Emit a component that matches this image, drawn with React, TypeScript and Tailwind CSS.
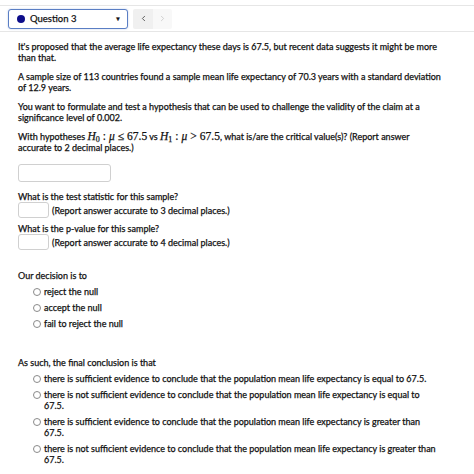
import { ChevronLeft, ChevronRight } from "lucide-react";

const Radio = () => (
  <span className="mt-[2px] inline-block h-[8px] w-[8px] shrink-0 rounded-full border border-[#8a8a8a] bg-white" />
);

const Option = ({ text }: { text: string }) => (
  <label className="flex items-start gap-[3px]">
    <Radio />
    <span>{text}</span>
  </label>
);

// mathjax-ish inline formula: H_n : mu <rel> 67.5
const Hyp = ({ n, rel }: { n: string; rel: string }) => (
  <span className="inline-block h-[11px] font-['Liberation_Serif',serif] text-[11.5px] leading-[11px] whitespace-nowrap">
    <i>H</i>
    <span className="relative top-[2px] text-[8px]">{n}</span>
    <span className="mx-[3px]">:</span>
    <i>μ</i>
    <span className="mx-[3px]">{rel}</span>
    67.5
  </span>
);

export default function App() {
  return (
    <div className="min-h-[474px] w-[474px] bg-white font-['Lato',sans-serif] text-[9px] leading-[11px] text-[#111] [-webkit-text-stroke:0.25px_#111]">
      <div className="pt-[5px]">
        <div className="flex h-[27px] items-center gap-[5px] border-y border-[#e6e6e6] px-[8px]">
          <div className="flex h-[20px] w-[120px] items-center rounded-[3px] border border-[#5a7ec4] bg-white pl-[8px] pr-[6px] shadow-[0_0_2px_rgba(90,126,196,0.4)]">
            <span className="h-[8px] w-[8px] rounded-full bg-[#0d0d8a]" />
            <span className="ml-[5px] flex-1 text-[9.5px]">Question 3</span>
            <span className="text-[6px]">▼</span>
          </div>
          <div className="flex">
            <button className="flex h-[20px] w-[20px] items-center justify-center rounded-l-[2px] bg-[#f0f0f0] text-[#333]">
              <ChevronLeft className="h-[9px] w-[9px]" strokeWidth={2} />
            </button>
            <button className="flex h-[20px] w-[19px] items-center justify-center rounded-r-[2px] bg-[#f8f8f8] text-[#c4c4c4]">
              <ChevronRight className="h-[9px] w-[9px]" strokeWidth={2} />
            </button>
          </div>
        </div>
      </div>

      <div className="flex w-[444px] flex-col pl-[18px] pt-[9px]">
        <p>It's proposed that the average life expectancy these days is 67.5, but recent data suggests it might be more than that.</p>
        <p className="mt-[8px]">A sample size of 113 countries found a sample mean life expectancy of 70.3 years with a standard deviation of 12.9 years.</p>
        <p className="mt-[8px]">You want to formulate and test a hypothesis that can be used to challenge the validity of the claim at a significance level of 0.002.</p>
        <p className="mt-[8px]">
          With hypotheses <Hyp n="0" rel="≤" /> vs <Hyp n="1" rel=">" />, what is/are the critical value(s)? (Report answer accurate to 2 decimal places.)
        </p>

        <div className="mt-[11px] h-[18px] w-[93px] rounded-[3px] border border-[#d0d0d0] bg-white" />

        <p className="mt-[9px]">What is the test statistic for this sample?</p>
        <div className="flex items-center gap-[3px]">
          <div className="h-[16px] w-[31px] rounded-[3px] border border-[#d0d0d0]" />
          <span>(Report answer accurate to 3 decimal places.)</span>
        </div>

        <p className="mt-[5px]">What is the p-value for this sample?</p>
        <div className="flex items-center gap-[3px]">
          <div className="h-[16px] w-[31px] rounded-[3px] border border-[#d0d0d0]" />
          <span>(Report answer accurate to 4 decimal places.)</span>
        </div>

        <p className="mt-[20px]">Our decision is to</p>
        <div className="mt-[5px] flex flex-col gap-[5px] pl-[15px]">
          <Option text="reject the null" />
          <Option text="accept the null" />
          <Option text="fail to reject the null" />
        </div>

        <p className="mt-[28px]">As such, the final conclusion is that</p>
        <div className="mt-[5px] flex flex-col gap-[5px] pl-[15px] pr-[6px]">
          <Option text="there is sufficient evidence to conclude that the population mean life expectancy is equal to 67.5." />
          <Option text="there is not sufficient evidence to conclude that the population mean life expectancy is equal to 67.5." />
          <Option text="there is sufficient evidence to conclude that the population mean life expectancy is greater than 67.5." />
          <Option text="there is not sufficient evidence to conclude that the population mean life expectancy is greater than 67.5." />
        </div>
      </div>
    </div>
  );
}
